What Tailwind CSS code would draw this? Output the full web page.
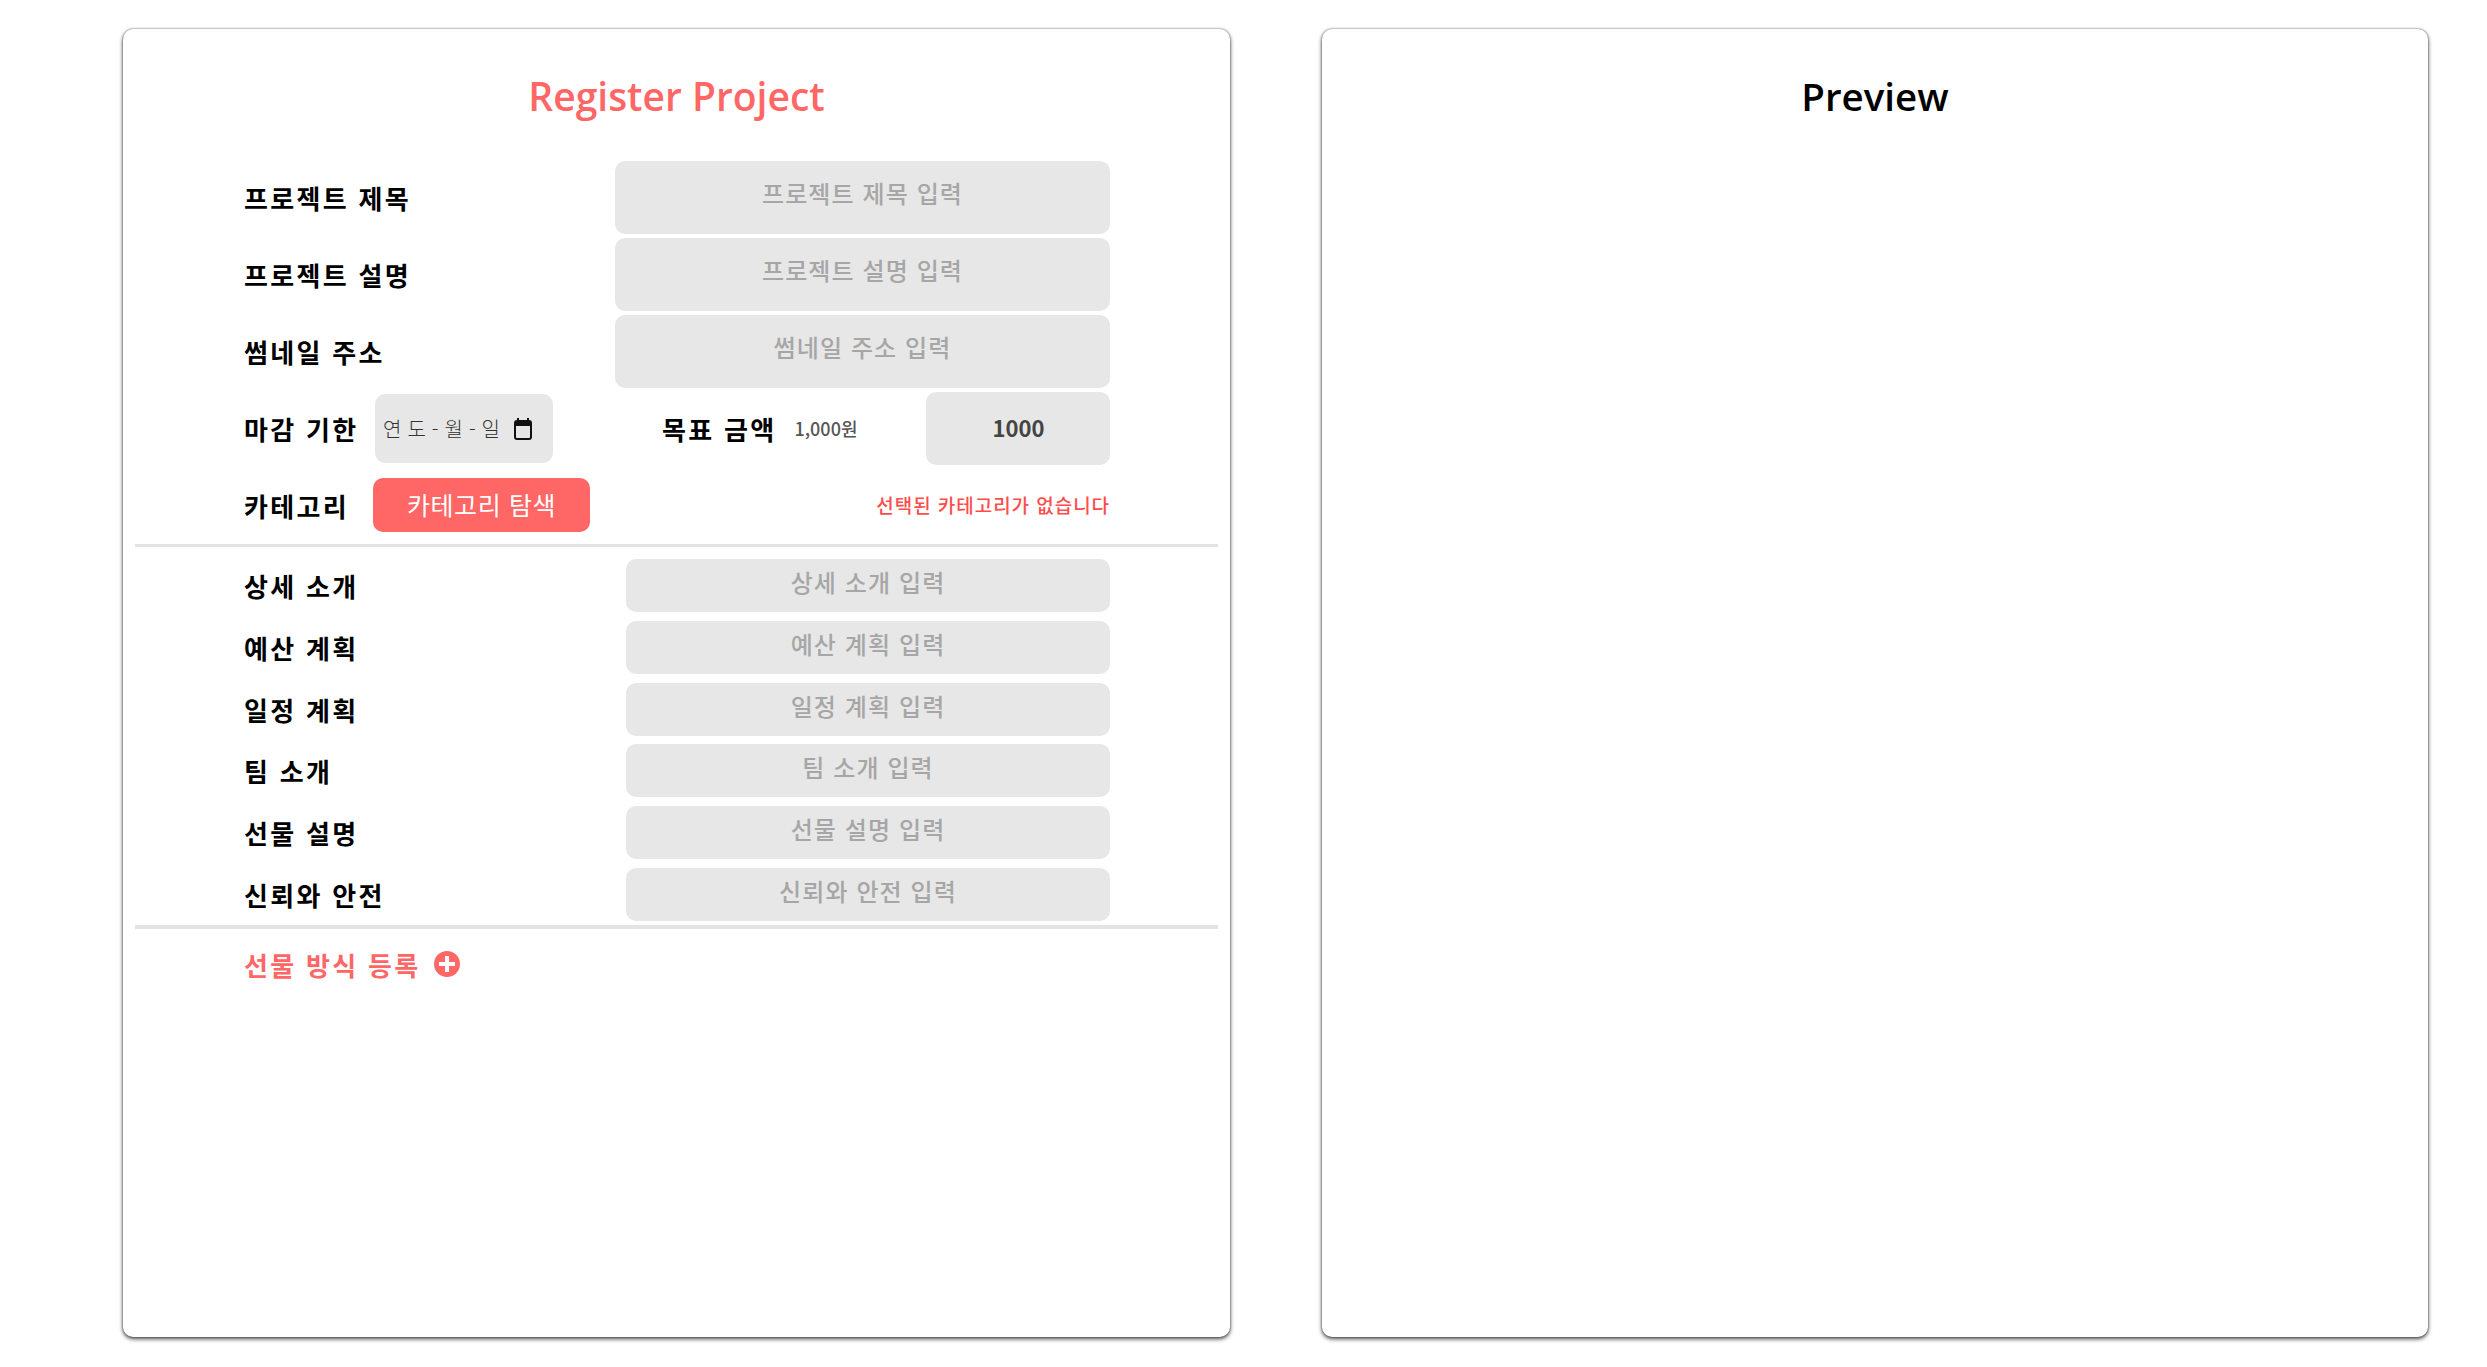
<!DOCTYPE html>
<html lang="ko">
  <head>
    <meta charset="UTF-8" />
    <title>Register Project</title>
    <script src="https://cdn.jsdelivr.net/npm/@tailwindcss/browser@4"></script>
  </head>
  <body class="bg-white font-['Noto_Sans_CJK_KR','Noto_Sans',sans-serif] text-black">
    <div class="flex gap-[92px] min-h-[1367px] pl-[123px] pt-[29px]">
      <!-- Register -->
      <div class="shrink-0 w-[1107px] h-[1308px] rounded-[10px] bg-white shadow-[0_0_2px_rgba(0,0,0,0.55),0_2px_4px_rgba(0,0,0,0.7)]">
        <h1 class="h-[132px] pt-[37px] text-center text-[39px] leading-[60px] font-semibold text-[#ff6666] font-['Open_Sans',sans-serif]">Register Project</h1>

        <div class="pl-[121px] pr-[120px]">
          <div class="flex items-center justify-between h-[73px] mb-1">
            <label class="text-[26px] font-bold tracking-[2.3px]">프로젝트 제목</label>
            <input type="text" placeholder="프로젝트 제목 입력" class="w-[495px] h-[73px] pb-[10px] rounded-[10px] bg-[#e7e7e7] text-center text-[24px] tracking-[1.1px] font-medium placeholder:text-[#a6a6a6]" />
          </div>
          <div class="flex items-center justify-between h-[73px] mb-1">
            <label class="text-[26px] font-bold tracking-[2.3px]">프로젝트 설명</label>
            <input type="text" placeholder="프로젝트 설명 입력" class="w-[495px] h-[73px] pb-[10px] rounded-[10px] bg-[#e7e7e7] text-center text-[24px] tracking-[1.1px] font-medium placeholder:text-[#a6a6a6]" />
          </div>
          <div class="flex items-center justify-between h-[73px] mb-1">
            <label class="text-[26px] font-bold tracking-[2.3px]">썸네일 주소</label>
            <input type="text" placeholder="썸네일 주소 입력" class="w-[495px] h-[73px] pb-[10px] rounded-[10px] bg-[#e7e7e7] text-center text-[24px] tracking-[1.1px] font-medium placeholder:text-[#a6a6a6]" />
          </div>

          <div class="flex items-center h-[73px]">
            <label class="shrink-0 w-[131px] text-[26px] font-bold tracking-[2.3px]">마감 기한</label>
            <div class="shrink-0 flex items-center justify-between w-[178px] h-[69px] pl-2 pr-[20px] rounded-[10px] bg-[#e7e7e7]">
              <span class="text-[20px] font-light tracking-[6px] text-[#333] whitespace-nowrap">연도-월-일</span>
              <svg class="w-[20px] h-[22px]" viewBox="0 0 20 22" fill="none"><path d="M5 0v4M15 0v4" stroke="#111" stroke-width="2"/><rect x="2" y="3" width="16" height="18" rx="2" stroke="#111" stroke-width="2"/><rect x="2" y="3" width="16" height="5" fill="#111"/></svg>
            </div>
            <label class="shrink-0 ml-[109px] text-[26px] font-bold tracking-[2.3px] whitespace-nowrap">목표 금액</label>
            <span class="shrink-0 ml-[18px] w-[132px] text-[18px] font-medium text-[#555]">1,000원</span>
            <input type="text" value="1000" class="shrink-0 w-[184px] h-[73px] pb-[4px] rounded-[10px] bg-[#e7e7e7] text-center text-[22px] font-semibold text-[#444]" />
          </div>

          <div class="flex items-center justify-between h-[54px] mt-[13px]">
            <div class="flex items-center">
              <label class="w-[129px] text-[26px] font-bold tracking-[2.3px]">카테고리</label>
              <button class="w-[217px] h-[54px] rounded-[10px] bg-[#ff6666] text-white text-[25px] tracking-[0.6px]">카테고리 탐색</button>
            </div>
            <span class="text-[19px] font-medium tracking-[0.95px] text-[#ff4d4d]">선택된 카테고리가 없습니다</span>
          </div>
        </div>

        <div class="h-[3px] mx-[12px] mt-3 bg-[#e3e3e3]"></div>

        <div class="pl-[121px] pr-[120px] pt-3">
          <div class="flex items-center justify-between h-[53px] mb-[8.8px]">
            <label class="text-[26px] font-bold tracking-[2.3px]">상세 소개</label>
            <input type="text" placeholder="상세 소개 입력" class="w-[484px] h-[53px] pb-[8px] rounded-[10px] bg-[#e7e7e7] text-center text-[24px] tracking-[1.1px] font-medium placeholder:text-[#a6a6a6]" />
          </div>
          <div class="flex items-center justify-between h-[53px] mb-[8.8px]">
            <label class="text-[26px] font-bold tracking-[2.3px]">예산 계획</label>
            <input type="text" placeholder="예산 계획 입력" class="w-[484px] h-[53px] pb-[8px] rounded-[10px] bg-[#e7e7e7] text-center text-[24px] tracking-[1.1px] font-medium placeholder:text-[#a6a6a6]" />
          </div>
          <div class="flex items-center justify-between h-[53px] mb-[8.8px]">
            <label class="text-[26px] font-bold tracking-[2.3px]">일정 계획</label>
            <input type="text" placeholder="일정 계획 입력" class="w-[484px] h-[53px] pb-[8px] rounded-[10px] bg-[#e7e7e7] text-center text-[24px] tracking-[1.1px] font-medium placeholder:text-[#a6a6a6]" />
          </div>
          <div class="flex items-center justify-between h-[53px] mb-[8.8px]">
            <label class="text-[26px] font-bold tracking-[2.3px]">팀 소개</label>
            <input type="text" placeholder="팀 소개 입력" class="w-[484px] h-[53px] pb-[8px] rounded-[10px] bg-[#e7e7e7] text-center text-[24px] tracking-[1.1px] font-medium placeholder:text-[#a6a6a6]" />
          </div>
          <div class="flex items-center justify-between h-[53px] mb-[8.8px]">
            <label class="text-[26px] font-bold tracking-[2.3px]">선물 설명</label>
            <input type="text" placeholder="선물 설명 입력" class="w-[484px] h-[53px] pb-[8px] rounded-[10px] bg-[#e7e7e7] text-center text-[24px] tracking-[1.1px] font-medium placeholder:text-[#a6a6a6]" />
          </div>
          <div class="flex items-center justify-between h-[53px]">
            <label class="text-[26px] font-bold tracking-[2.3px]">신뢰와 안전</label>
            <input type="text" placeholder="신뢰와 안전 입력" class="w-[484px] h-[53px] pb-[8px] rounded-[10px] bg-[#e7e7e7] text-center text-[24px] tracking-[1.1px] font-medium placeholder:text-[#a6a6a6]" />
          </div>
        </div>

        <div class="h-[4px] mx-[12px] mt-1 bg-[#e3e3e3]"></div>

        <div class="flex items-center gap-[14px] pl-[121px] mt-[16px]">
          <span class="text-[26px] font-bold tracking-[2.3px] text-[#ff6666]">선물 방식 등록</span>
          <svg class="w-[26px] h-[26px]" viewBox="0 0 26 26"><circle cx="13" cy="13" r="13" fill="#ff6666"/><path d="M11 5h4v6h6v4h-6v6h-4v-6H5v-4h6z" fill="#fff"/></svg>
        </div>
      </div>

      <!-- Preview -->
      <div class="shrink-0 w-[1106px] h-[1308px] rounded-[10px] bg-white shadow-[0_0_2px_rgba(0,0,0,0.55),0_2px_4px_rgba(0,0,0,0.7)]">
        <h1 class="pt-[37px] text-center text-[38.5px] leading-[60px] font-semibold font-['Open_Sans',sans-serif]">Preview</h1>
      </div>
    </div>
  </body>
</html>
